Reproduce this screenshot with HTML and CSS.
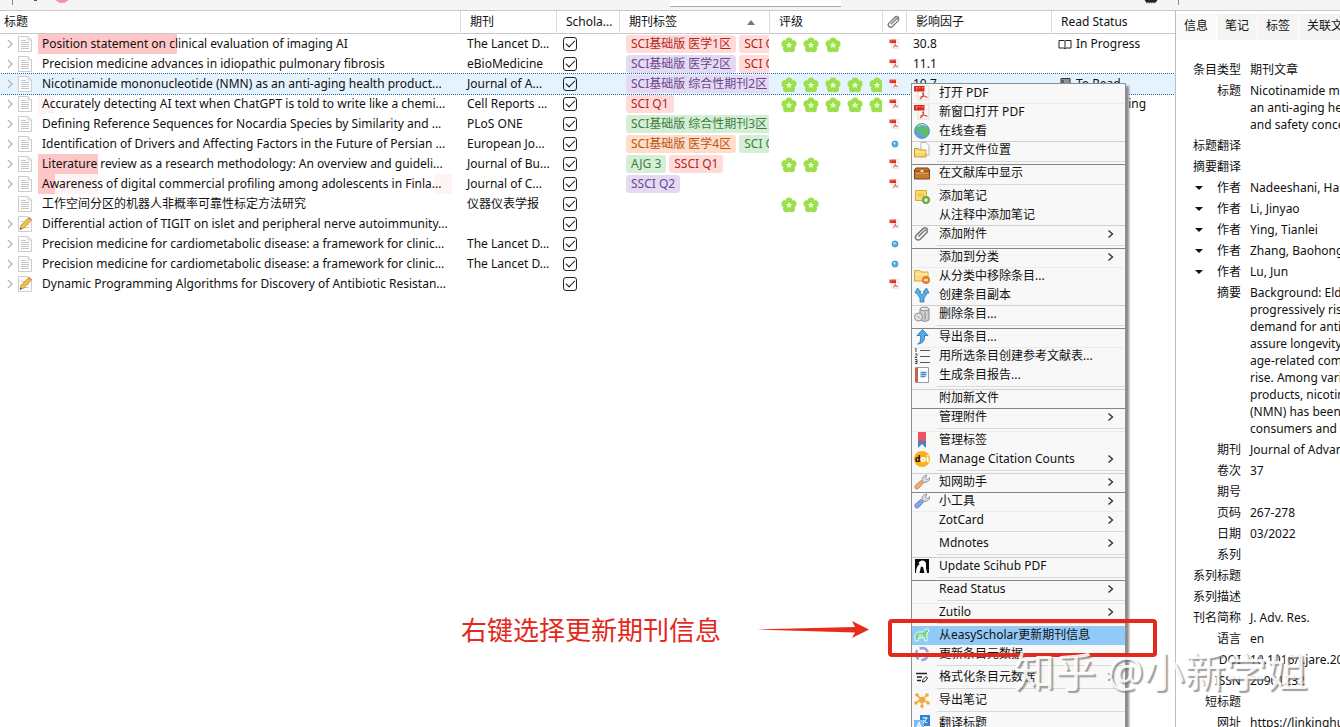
FILE: index.html
```html
<!DOCTYPE html>
<html lang="zh-CN">
<head>
    <meta charset="UTF-8">
    <meta name="viewport" content="width=device-width, initial-scale=1.0">
    <link rel="stylesheet" href="styles.css">
    <title>Zotero</title>
</head>
<body>
    <svg class="sprites" aria-hidden="true">
        <symbol id="twisty" viewBox="0 0 8 12"><path d="M2 2l4 4-4 4" fill="none" stroke="#b4b4b4" stroke-width="1.3"/></symbol>
        <symbol id="doc" viewBox="0 0 14 16"><path d="M.5.5h9.500l3.500 3.500v11.500h-13z" fill="#fcfcfc" stroke="#cdcdcd"/><path d="M10 .5v3.500h3.500" fill="none" stroke="#cdcdcd"/><path d="M3 4.500h5M3 6.500h8M3 8.500h8M3 10.500h8M3 12.500h8" stroke="#c6c6c6"/></symbol>
        <symbol id="note-doc" viewBox="0 0 14 16"><path d="M.5.5h9.500l3.500 3.500v11.500h-13z" fill="#fcfcfc" stroke="#cdcdcd"/><path d="M3 5.500h5M3 8.500h8M3 11.500h8" stroke="#cdcdcd"/><path d="M2 13.500l1-4L10 2l3 2.500L6 12z" fill="#f0c04c" stroke="#b98a2c" stroke-width=".7"/><path d="M10 2l1.200-1.200 3 2.500L13 4.500z" fill="#d9896a"/><path d="M2 13.500l.5-2 1.500 1.300z" fill="#444"/></symbol>
        <symbol id="pdf" viewBox="0 0 16 16"><path d="M4 1h11v14H4z" fill="#fbf7f6" stroke="#d8cfcd" stroke-width=".6"/><path d="M0 1h10.500v5.500H0z" fill="#dc2a20"/><path d="M2 2.800h2M5 2.800h1.500M8 2.800h1.500M2 4.300h1" stroke="#f6b0a8"/><path d="M9 7c1 2 0 5-3 7M8.500 8c.5 2.500 2.500 4 5 4.500M6.500 12c2-1 4-1 6-.5" fill="none" stroke="#d9483e" stroke-width="1.100"/></symbol>
        <symbol id="flower" viewBox="0 0 16 16"><g fill="#9be04a"><circle cx="8" cy="4" r="3.500"/><circle cx="12" cy="6.800" r="3.500"/><circle cx="10.500" cy="11.800" r="3.500"/><circle cx="5.500" cy="11.800" r="3.500"/><circle cx="4" cy="6.800" r="3.500"/></g><path d="M8 4.500l.9 2.400 2.600.1-2 1.600.7 2.500L8 9.700l-2.200 1.400.7-2.500-2-1.600 2.600-.1z" fill="#e9ffd2"/></symbol>
        <symbol id="clip" viewBox="0 0 16 16"><path d="M4.500 10.500l6-6a1.500 1.500 0 0 1 2.200 2.200l-6.500 6.500a2.700 2.700 0 0 1-3.900-3.900L9 2.600a2.900 2.900 0 0 1 4.800 1.200" fill="none" stroke="#777" stroke-width="1.500"/></symbol>
        <symbol id="dot" viewBox="0 0 8 8"><circle cx="4" cy="4" r="3" fill="#58b4e6" stroke="#2f86bd" stroke-width=".8"/><circle cx="3.500" cy="3.200" r="1.200" fill="#a9dcf6"/></symbol>
        <symbol id="book" viewBox="0 0 14 12"><path d="M1 2.500h5l1 .8 1-.8h5v7.500H8l-1 .8-1-.8H1zM7 3.300v7" fill="#fff" stroke="#222" stroke-width="1"/></symbol>
        <symbol id="book-shut" viewBox="0 0 14 12"><path d="M3 .5h9v11H3z" fill="#8d949b" stroke="#333"/><path d="M5 2v8" stroke="#333"/></symbol>
        <symbol id="arrow" viewBox="0 0 8 10"><path d="M1.500 1.500L5.500 5l-4 3.500" fill="none" stroke="#333" stroke-width="1.400"/></symbol>
        <symbol id="globe" viewBox="0 0 16 16"><circle cx="8" cy="8" r="7.500" fill="#5ba6cf" stroke="#3a84a3" stroke-width=".7"/><path d="M2 5c2-3 4-3.500 6-3.800l1 2.300-2 1.500 1 2-3 2L3 8zM10 4l3.500.5L15 8l-2 4.500-3 1.500-1-3.500L7 9l2-2.500z" fill="#5fbf5d"/><path d="M3.500 3.500c3-2.500 7-2.500 9 0" fill="none" stroke="#d6f0f2"/></symbol>
        <symbol id="folder-doc" viewBox="0 0 16 16"><path d="M7 .5h5l3 3V13H7z" fill="#fff" stroke="#b5b5b5"/><path d="M.5 6.500h4l1.500 1.500h6v7H.5z" fill="#f8d66c" stroke="#c99b38"/><path d="M1.500 10h10" stroke="#fff2b8"/></symbol>
        <symbol id="box" viewBox="0 0 16 16"><path d="M.5 4.500L2 3h12l1.500 1.500V14H.5z" fill="#c67a30" stroke="#7b4316"/><path d="M1 6h14" stroke="#7b4316"/><path d="M6.500 5h3v2h-3z" fill="#f4d9a6"/><path d="M2 8.500h12" stroke="#dc9a54"/></symbol>
        <symbol id="note-add" viewBox="0 0 16 16"><path d="M1.500 2.500h11v10h-11z" fill="#fbdc70" stroke="#dca92f"/><path d="M4 6h6M4 8h6" stroke="#e4b64a"/><circle cx="12" cy="12" r="3.700" fill="#72b443" stroke="#46812a" stroke-width=".6"/><path d="M10 12h4M12 10v4" stroke="#fff" stroke-width="1.200"/></symbol>
        <symbol id="folder-remove" viewBox="0 0 16 16"><path d="M.5 2.500h5L7 4h7v9H.5z" fill="#fbdc7c" stroke="#d6a63b"/><path d="M1 6h13" stroke="#fff3bf"/><circle cx="12" cy="12" r="3.700" fill="#ef8536" stroke="#bb5b18" stroke-width=".6"/><path d="M10 12h4" stroke="#fff" stroke-width="1.400"/></symbol>
        <symbol id="fork" viewBox="0 0 16 16"><path d="M6 15V11L2.500 6H1L3.500 1 7 5H5.500L8 8l2.500-3H9l3.500-4L15 6h-1.500l-3.500 5v4z" fill="#58aee6" stroke="#2779b4" stroke-width=".8"/></symbol>
        <symbol id="trash" viewBox="0 0 16 16"><path d="M6 3h9v11l-4 1.500-5-1.500z" fill="#cfcfcf" stroke="#8c8c8c"/><ellipse cx="10.500" cy="3" rx="4.500" ry="1.800" fill="#e9e9e9" stroke="#8c8c8c"/><circle cx="4.500" cy="11" r="4" fill="#e3e3e3" stroke="#8f8f8f"/><path d="M3 9.500l3 3M11 6.500v7" stroke="#8f8f8f"/></symbol>
        <symbol id="export" viewBox="0 0 16 16"><path d="M3.500 15c3-1 3.500-4 3-8.500H3L8.500.5l5.500 6h-3.500c.5 5-1.500 8-7 8.500z" fill="#52ace8" stroke="#2371ab" stroke-width=".8"/></symbol>
        <symbol id="numbers" viewBox="0 0 16 16"><path d="M6 2.500h10M6 8.500h10M6 14.500h10" stroke="#555"/><path d="M1 1l1-.5V4M1 6h2v1.500L1 9.500h2M1 11.500h2v4H1M1 13.500h2" fill="none" stroke="#333" stroke-width=".9"/></symbol>
        <symbol id="report" viewBox="0 0 16 16"><path d="M1.500.5h13v15h-13z" fill="#fff" stroke="#9a9a9a"/><path d="M1 1h3v14H1z" fill="#b9694a"/><path d="M6.500 5.500h6M6.500 7.500h6M6.500 9.500h5" stroke="#4d8ccb" stroke-width="1.300"/></symbol>
        <symbol id="bookmark" viewBox="0 0 16 16"><path d="M4 0h8v10H4z" fill="#f0525f"/><path d="M4 9h8v7l-4-4-4 4z" fill="#4b7fc4"/></symbol>
        <symbol id="wrench-orange" viewBox="0 0 16 16"><path d="M1.500 14.500c-1.500-1.500 0-3.500 1-4.500L7 6.500 9.500 9 6 13c-1.500 1.500-3 3-4.500 1.500z" fill="#f5a771" stroke="#b87443" stroke-width=".7"/><path d="M8 7c0-3 1.500-6 5-6l-1.500 3 2 1.500L16 3.500c0 3-2.500 5-6 5z" fill="#d8dbde" stroke="#7f868d" stroke-width=".8"/></symbol>
        <symbol id="wrench-blue" viewBox="0 0 16 16"><path d="M1.500 14.500c-1.500-1.500 0-3.500 1-4.500L7 6.500 9.500 9 6 13c-1.500 1.500-3 3-4.500 1.500z" fill="#7ea8e8" stroke="#4a6fae" stroke-width=".7"/><path d="M8 7c0-3 1.500-6 5-6l-1.500 3 2 1.500L16 3.500c0 3-2.500 5-6 5z" fill="#d8dbde" stroke="#7f868d" stroke-width=".8"/></symbol>
        <symbol id="raven" viewBox="0 0 16 16"><path d="M1 1h14v14H1z" fill="#0b0b0b"/><path d="M2 15c0-4 1-7 3.500-9L4.500 4.500l3-2C10 2 12 3.500 12 6v4l1 5h-2.500L9 9 7 8.500 5.500 15z" fill="#fff"/></symbol>
        <symbol id="horse" viewBox="0 0 16 16"><path d="M1 14V9c0-3 2-4 4-4h4c1-2 3-3 5-3l1 2-2 2v8h-2l-1-4H5l-1 4z" fill="#7fcf9c" stroke="#e8fff0"/><path d="M4 8h5M5 11h4" stroke="#d8f4c0"/></symbol>
        <symbol id="sync" viewBox="0 0 16 16"><circle cx="8" cy="8" r="6" fill="none" stroke="#93a5dc" stroke-width="2.500" stroke-dasharray="10 2.500"/></symbol>
        <symbol id="format" viewBox="0 0 16 16"><path d="M2 4.500h11M3 8h5M3 11.500h4" stroke="#222" stroke-width="1.600"/><path d="M8.500 13l.5-2.500L12 7.500l1.500 1.500L11 12.500z" fill="none" stroke="#222"/></symbol>
        <symbol id="hub" viewBox="0 0 16 16"><path d="M8 8L3 3M8 8l5-5M8 8L2 10M8 8l6 2M8 8v6" stroke="#f2a93b" stroke-width="1.500"/><g fill="#f2a93b"><circle cx="8" cy="8" r="3.200"/><circle cx="3" cy="3" r="1.800"/><circle cx="13" cy="3" r="1.800"/><circle cx="2" cy="11" r="1.800"/><circle cx="14" cy="11" r="1.800"/><circle cx="8" cy="14.200" r="1.700"/></g></symbol>
        <symbol id="translate" viewBox="0 0 16 16"><path d="M6 0h10v11H6z" fill="#2c86d8"/><path d="M0 5h10v11H0z" fill="#7dbcf0"/><path d="M8.500 3h5M11 2v1.500M9 8c2-1 3-3 3.500-5M9.500 5c1 2 2 2.500 4 3" fill="none" stroke="#fff"/><path d="M2.500 13.500L5 7.500l2.500 6M3.500 11.500h3" fill="none" stroke="#fff" stroke-width="1.200"/></symbol>
    </svg>

    <header class="toolbar">
        <span class="bar bar-left"></span>
        <span class="speck"></span>
        <span class="pink-dot"></span>
        <input class="search" type="text" aria-label="搜索">
        <svg class="ghost" viewBox="0 0 16 5" aria-hidden="true"><path d="M0 0h16l-2 3H2z" fill="#222"/><path d="M3 3v1M6 3v1M9 3v1M12 3v1" stroke="#222" stroke-width="1.500"/></svg>
        <span class="bar bar-right"></span>
    </header>

    <main class="workspace">
        <section class="items">
            <table>
                <colgroup>
                    <col class="c-title"><col class="c-journal"><col class="c-scholar"><col class="c-tags"><col class="c-rating"><col class="c-attach"><col class="c-if"><col class="c-status">
                </colgroup>
                <thead>
                    <tr>
                        <th class="first">标题</th>
                        <th>期刊</th>
                        <th>Schola...</th>
                        <th>期刊标签<span class="sort"></span></th>
                        <th>评级</th>
                        <th class="clip-head"><svg class="i14" aria-label="附件"><use href="#clip"/></svg></th>
                        <th>影响因子</th>
                        <th>Read Status</th>
                    </tr>
                </thead>
                <tbody>
                    <tr>
                        <td><div class="title"><svg class="twisty"><use href="#twisty"/></svg><svg class="doc"><use href="#doc"/></svg><span class="heat heat-a">Position statement on clinical evaluation of imaging AI</span></div></td>
                        <td>The Lancet D...</td>
                        <td><input type="checkbox" aria-label="Scholar" checked></td>
                        <td><div class="tags"><span class="tag red">SCI基础版 医学1区</span><span class="tag red">SCI Q1</span></div></td>
                        <td><div class="stars"><svg><use href="#flower"/></svg><svg><use href="#flower"/></svg><svg><use href="#flower"/></svg></div></td>
                        <td><svg class="pdf"><use href="#pdf"/></svg></td>
                        <td>30.8</td>
                        <td><div class="status"><svg><use href="#book"/></svg>In Progress</div></td>
                    </tr>
                    <tr>
                        <td><div class="title"><svg class="twisty"><use href="#twisty"/></svg><svg class="doc"><use href="#doc"/></svg><span class="heat">Precision medicine advances in idiopathic pulmonary fibrosis</span></div></td>
                        <td>eBioMedicine</td>
                        <td><input type="checkbox" aria-label="Scholar" checked></td>
                        <td><div class="tags"><span class="tag purple">SCI基础版 医学2区</span><span class="tag red">SCI Q1</span></div></td>
                        <td></td>
                        <td><svg class="pdf"><use href="#pdf"/></svg></td>
                        <td>11.1</td>
                        <td></td>
                    </tr>
                    <tr class="selected">
                        <td><div class="title"><svg class="twisty"><use href="#twisty"/></svg><svg class="doc"><use href="#doc"/></svg><span class="heat">Nicotinamide mononucleotide (NMN) as an anti-aging health product...</span></div></td>
                        <td>Journal of A...</td>
                        <td><input type="checkbox" aria-label="Scholar" checked></td>
                        <td><div class="tags"><span class="tag purple">SCI基础版 综合性期刊2区</span></div></td>
                        <td><div class="stars"><svg><use href="#flower"/></svg><svg><use href="#flower"/></svg><svg><use href="#flower"/></svg><svg><use href="#flower"/></svg><svg><use href="#flower"/></svg></div></td>
                        <td><svg class="pdf"><use href="#pdf"/></svg></td>
                        <td>10.7</td>
                        <td><div class="status"><svg><use href="#book-shut"/></svg>To Read</div></td>
                    </tr>
                    <tr>
                        <td><div class="title"><svg class="twisty"><use href="#twisty"/></svg><svg class="doc"><use href="#doc"/></svg><span class="heat heat-b">Accurately detecting AI text when ChatGPT is told to write like a chemi...</span></div></td>
                        <td>Cell Reports ...</td>
                        <td><input type="checkbox" aria-label="Scholar" checked></td>
                        <td><div class="tags"><span class="tag red">SCI Q1</span></div></td>
                        <td><div class="stars"><svg><use href="#flower"/></svg><svg><use href="#flower"/></svg><svg><use href="#flower"/></svg><svg><use href="#flower"/></svg><svg><use href="#flower"/></svg></div></td>
                        <td><svg class="pdf"><use href="#pdf"/></svg></td>
                        <td></td>
                        <td><div class="status"><svg><use href="#book-shut"/></svg>Not Reading</div></td>
                    </tr>
                    <tr>
                        <td><div class="title"><svg class="twisty"><use href="#twisty"/></svg><svg class="doc"><use href="#doc"/></svg><span class="heat">Defining Reference Sequences for Nocardia Species by Similarity and ...</span></div></td>
                        <td>PLoS ONE</td>
                        <td><input type="checkbox" aria-label="Scholar" checked></td>
                        <td><div class="tags"><span class="tag green">SCI基础版 综合性期刊3区</span></div></td>
                        <td></td>
                        <td><svg class="pdf"><use href="#pdf"/></svg></td>
                        <td></td>
                        <td></td>
                    </tr>
                    <tr>
                        <td><div class="title"><svg class="twisty"><use href="#twisty"/></svg><svg class="doc"><use href="#doc"/></svg><span class="heat">Identification of Drivers and Affecting Factors in the Future of Persian ...</span></div></td>
                        <td>European Jo...</td>
                        <td><input type="checkbox" aria-label="Scholar" checked></td>
                        <td><div class="tags"><span class="tag orange">SCI基础版 医学4区</span><span class="tag green">SCI Q3</span></div></td>
                        <td></td>
                        <td><svg class="dot"><use href="#dot"/></svg></td>
                        <td></td>
                        <td></td>
                    </tr>
                    <tr>
                        <td><div class="title"><svg class="twisty"><use href="#twisty"/></svg><svg class="doc"><use href="#doc"/></svg><span class="heat heat-c">Literature review as a research methodology: An overview and guideli...</span></div></td>
                        <td>Journal of Bu...</td>
                        <td><input type="checkbox" aria-label="Scholar" checked></td>
                        <td><div class="tags"><span class="tag green">AJG 3</span><span class="tag red">SSCI Q1</span></div></td>
                        <td><div class="stars"><svg><use href="#flower"/></svg><svg><use href="#flower"/></svg></div></td>
                        <td><svg class="pdf"><use href="#pdf"/></svg></td>
                        <td></td>
                        <td></td>
                    </tr>
                    <tr>
                        <td><div class="title"><svg class="twisty"><use href="#twisty"/></svg><svg class="doc"><use href="#doc"/></svg><span class="heat heat-d">Awareness of digital commercial profiling among adolescents in Finla...</span></div></td>
                        <td>Journal of C...</td>
                        <td><input type="checkbox" aria-label="Scholar" checked></td>
                        <td><div class="tags"><span class="tag purple">SSCI Q2</span></div></td>
                        <td></td>
                        <td><svg class="pdf"><use href="#pdf"/></svg></td>
                        <td></td>
                        <td></td>
                    </tr>
                    <tr>
                        <td><div class="title"><svg class="twisty"></svg><svg class="doc"><use href="#doc"/></svg><span class="heat">工作空间分区的机器人非概率可靠性标定方法研究</span></div></td>
                        <td>仪器仪表学报</td>
                        <td><input type="checkbox" aria-label="Scholar" checked></td>
                        <td></td>
                        <td><div class="stars"><svg><use href="#flower"/></svg><svg><use href="#flower"/></svg></div></td>
                        <td></td>
                        <td></td>
                        <td></td>
                    </tr>
                    <tr>
                        <td><div class="title"><svg class="twisty"><use href="#twisty"/></svg><svg class="doc"><use href="#note-doc"/></svg><span class="heat">Differential action of TIGIT on islet and peripheral nerve autoimmunity...</span></div></td>
                        <td></td>
                        <td><input type="checkbox" aria-label="Scholar" checked></td>
                        <td></td>
                        <td></td>
                        <td><svg class="pdf"><use href="#pdf"/></svg></td>
                        <td></td>
                        <td></td>
                    </tr>
                    <tr>
                        <td><div class="title"><svg class="twisty"><use href="#twisty"/></svg><svg class="doc"><use href="#doc"/></svg><span class="heat">Precision medicine for cardiometabolic disease: a framework for clinic...</span></div></td>
                        <td>The Lancet D...</td>
                        <td><input type="checkbox" aria-label="Scholar" checked></td>
                        <td></td>
                        <td></td>
                        <td><svg class="dot"><use href="#dot"/></svg></td>
                        <td></td>
                        <td></td>
                    </tr>
                    <tr>
                        <td><div class="title"><svg class="twisty"><use href="#twisty"/></svg><svg class="doc"><use href="#doc"/></svg><span class="heat">Precision medicine for cardiometabolic disease: a framework for clinic...</span></div></td>
                        <td>The Lancet D...</td>
                        <td><input type="checkbox" aria-label="Scholar" checked></td>
                        <td></td>
                        <td></td>
                        <td><svg class="dot"><use href="#dot"/></svg></td>
                        <td></td>
                        <td></td>
                    </tr>
                    <tr>
                        <td><div class="title"><svg class="twisty"><use href="#twisty"/></svg><svg class="doc"><use href="#note-doc"/></svg><span class="heat">Dynamic Programming Algorithms for Discovery of Antibiotic Resistan...</span></div></td>
                        <td></td>
                        <td><input type="checkbox" aria-label="Scholar" checked></td>
                        <td></td>
                        <td></td>
                        <td><svg class="pdf"><use href="#pdf"/></svg></td>
                        <td></td>
                        <td></td>
                    </tr>
                </tbody>
            </table>
        </section>

        <aside class="details">
            <nav class="tabs">
                <button class="active">信息</button>
                <button>笔记</button>
                <button>标签</button>
                <button>关联文献</button>
            </nav>
            <dl class="fields">
                <dt>条目类型</dt><dd>期刊文章</dd>
                <dt>标题</dt><dd>Nicotinamide mononucleotide (NMN) as<br>an anti-aging health product – Promises<br>and safety concerns</dd>
                <dt>标题翻译</dt><dd></dd>
                <dt>摘要翻译</dt><dd></dd>
                <dt><button class="caret" aria-label="作者类型"></button>作者</dt><dd>Nadeeshani, Harshani</dd>
                <dt><button class="caret" aria-label="作者类型"></button>作者</dt><dd>Li, Jinyao</dd>
                <dt><button class="caret" aria-label="作者类型"></button>作者</dt><dd>Ying, Tianlei</dd>
                <dt><button class="caret" aria-label="作者类型"></button>作者</dt><dd>Zhang, Baohong</dd>
                <dt><button class="caret" aria-label="作者类型"></button>作者</dt><dd>Lu, Jun</dd>
                <dt>摘要</dt><dd>Background: Elderly population has been<br>progressively rising in the world, thus the<br>demand for anti-aging heath products to<br>assure longevity as well as to ameliorate<br>age-related complications is also on the<br>rise. Among various anti-aging health<br>products, nicotinamide mononucleotide<br>(NMN) has been gaining attentions of the<br>consumers and the scientific community</dd>
                <dt>期刊</dt><dd>Journal of Advanced Research</dd>
                <dt>卷次</dt><dd>37</dd>
                <dt>期号</dt><dd></dd>
                <dt>页码</dt><dd>267-278</dd>
                <dt>日期</dt><dd>03/2022</dd>
                <dt>系列</dt><dd></dd>
                <dt>系列标题</dt><dd></dd>
                <dt>系列描述</dt><dd></dd>
                <dt>刊名简称</dt><dd>J. Adv. Res.</dd>
                <dt>语言</dt><dd>en</dd>
                <dt>DOI</dt><dd>10.1016/j.jare.2021.08.003</dd>
                <dt>ISSN</dt><dd>20901232</dd>
                <dt>短标题</dt><dd></dd>
                <dt>网址</dt><dd>https://linkinghub.elsevier.com</dd>
            </dl>
        </aside>
    </main>

    <div class="menu" role="menu">
        <button><svg><use href="#pdf"/></svg>打开 PDF</button>
        <button class="faint"><svg><use href="#pdf"/></svg>新窗口打开 PDF</button>
        <button><svg><use href="#globe"/></svg>在线查看</button>
        <button class="light"><svg><use href="#folder-doc"/></svg>打开文件位置</button>
        <hr>
        <button class="dark"><svg><use href="#box"/></svg>在文献库中显示</button>
        <hr>
        <button><svg><use href="#note-add"/></svg>添加笔记</button>
        <button><svg></svg>从注释中添加笔记</button>
        <button class="light sub"><svg><use href="#clip"/></svg>添加附件</button>
        <hr>
        <button class="dark sub"><svg></svg>添加到分类</button>
        <button class="faint"><svg><use href="#folder-remove"/></svg>从分类中移除条目...</button>
        <button><svg><use href="#fork"/></svg>创建条目副本</button>
        <button class="light"><svg><use href="#trash"/></svg>删除条目...</button>
        <hr>
        <button class="dark"><svg><use href="#export"/></svg>导出条目...</button>
        <button class="faint"><svg><use href="#numbers"/></svg>用所选条目创建参考文献表...</button>
        <button><svg><use href="#report"/></svg>生成条目报告...</button>
        <hr>
        <button class="light"><svg></svg>附加新文件</button>
        <button class="dark sub"><svg></svg>管理附件</button>
        <hr>
        <button class="faint"><svg><use href="#bookmark"/></svg>管理标签</button>
        <button class="sub"><span class="doi">d<b>oi</b></span>Manage Citation Counts</button>
        <hr>
        <button class="light sub"><svg><use href="#wrench-orange"/></svg>知网助手</button>
        <button class="dark sub"><svg><use href="#wrench-blue"/></svg>小工具</button>
        <button class="faint sub"><svg></svg>ZotCard</button>
        <hr>
        <button class="sub"><svg></svg>Mdnotes</button>
        <hr>
        <button class="light"><svg><use href="#raven"/></svg>Update Scihub PDF</button>
        <hr>
        <button class="dark sub"><svg></svg>Read Status</button>
        <hr>
        <button class="faint sub"><svg></svg>Zutilo</button>
        <hr>
        <button class="current"><svg><use href="#horse"/></svg>从easyScholar更新期刊信息</button>
        <button><svg><use href="#sync"/></svg>更新条目元数据</button>
        <hr>
        <button class="sub"><svg><use href="#format"/></svg>格式化条目元数据</button>
        <hr>
        <button><svg><use href="#hub"/></svg>导出笔记</button>
        <hr>
        <button><svg><use href="#translate"/></svg>翻译标题</button>
    </div>

    <div class="callout">
        <span>右键选择更新期刊信息</span>
        <svg viewBox="0 0 112 20" aria-hidden="true"><path d="M0 9.500L98 7l-3-6 17 8.500L95 18l3-5.500z" fill="#ea2a1c"/></svg>
    </div>
    <div class="red-box"></div>
    <div class="watermark">知乎 @小新学姐</div>

    <script>
        // submenu arrows
        document.querySelectorAll(".menu .sub").forEach(function (item) {
            item.insertAdjacentHTML("beforeend", '<svg class="arrow"><use href="#arrow"/></svg>');
        });
    </script>
</body>
</html>
```
FILE: styles.css
```css
* {
    box-sizing: border-box;
}

body {
    margin: 0;
    height: 100vh;
    overflow: hidden;
    position: relative;
    display: flex;
    flex-direction: column;
    background: #fff;
    color: #111;
    font-family: "Noto Sans", "Noto Sans CJK SC", sans-serif;
    font-size: 12px;
}

button {
    border: 0;
    padding: 0;
    background: none;
    color: inherit;
    font: inherit;
}

svg {
    flex: none;
    display: block;
}

.sprites {
    position: absolute;
    width: 0;
    height: 0;
}

/* toolbar */
.toolbar {
    flex: none;
    display: flex;
    align-items: flex-start;
    height: 11px;
    overflow: hidden;
    background: #f5f5f5;
    border-bottom: 1px solid #c6c6c6;
}

.bar {
    width: 1px;
    height: 5px;
    background: #888;
}

.bar-left {
    margin-left: 12px;
}

.speck {
    width: 3px;
    height: 1px;
    margin-left: 21px;
    background: #555;
}

.pink-dot {
    width: 16px;
    height: 16px;
    margin: -13px 0 0 17px;
    border-radius: 50%;
    background: #f78fa7;
}

.search {
    width: 171px;
    height: 7px;
    margin-left: auto;
    padding: 0;
    border: 0;
    border-bottom: 1px solid #aaa;
    background: #fff;
}

.ghost {
    width: 16px;
    height: 4px;
    margin-left: 302px;
}

.bar-right {
    margin: 0 161px 0 19px;
}

/* items list */
.workspace {
    flex: 1;
    display: flex;
    min-height: 0;
}

.items {
    flex: 1;
    min-width: 0;
    overflow: hidden;
}

table {
    width: 100%;
    table-layout: fixed;
    border-spacing: 0;
}

.c-journal { width: 96px; }
.c-scholar { width: 63px; }
.c-tags { width: 150px; }
.c-rating { width: 113px; }
.c-attach { width: 24px; }
.c-if { width: 145px; }
.c-status { width: 124px; }

th {
    height: 23px;
    padding: 0 0 0 9px;
    border-left: 1px solid #dcdcdc;
    border-bottom: 1px solid #c8c8c8;
    font-weight: normal;
    text-align: left;
    line-height: 20px;
    white-space: nowrap;
}

th.first {
    padding-left: 4px;
    border-left: 0;
}

th.clip-head {
    padding-left: 4px;
}

.sort {
    float: right;
    margin: 8px 14px 0 0;
    border: 4px solid transparent;
    border-top: 0;
    border-bottom: 5px solid #777;
}

td {
    height: 20px;
    padding: 0 0 0 7px;
    line-height: 20px;
    white-space: nowrap;
    overflow: hidden;
}

td:first-child {
    padding: 0;
}

.selected {
    background: #e5f3ff;
    outline: 1px dotted #1668b0;
}

.title {
    display: flex;
    align-items: center;
    height: 20px;
}

.twisty {
    width: 8px;
    height: 12px;
    margin: 0 4px 0 6px;
}

.doc {
    width: 14px;
    height: 16px;
}

.heat {
    flex: 1;
    height: 20px;
    margin-left: 6px;
    padding-left: 4px;
    background-repeat: no-repeat;
}

.heat-a { background-image: linear-gradient(90deg, #ffc6c8 139px, transparent 139px); }
.heat-b { background-image: linear-gradient(90deg, #fff4f4 16px, transparent 16px); }
.heat-c { background-image: linear-gradient(90deg, #ffc6c8 60px, transparent 60px); }
.heat-d { background-image: linear-gradient(90deg, #ffc6c8 17px, #fff4f4 17px, #fff4f4 60px, transparent 60px, transparent 396px, #fff4f4 396px, #fff4f4 414px, transparent 414px); }

input[type="checkbox"] {
    appearance: none;
    display: block;
    width: 14px;
    height: 14px;
    margin: 0;
    border: 1px solid #222;
    border-radius: 3px;
}

input[type="checkbox"]::before {
    content: "";
    display: block;
    width: 8px;
    height: 4px;
    margin: 2px 0 0 2px;
    border-left: 1px solid #111;
    border-bottom: 1px solid #111;
    transform: rotate(-45deg);
}

.tags {
    display: flex;
    gap: 3px;
}

.tag {
    flex: none;
    height: 18px;
    padding: 0 5px;
    border-radius: 3px;
    line-height: 18px;
}

.red { background: #ffdcd9; color: #b3261e; }
.purple { background: #e4daf1; color: #6b4691; }
.green { background: #d5efd6; color: #3d7d43; }
.orange { background: #ffddc8; color: #b9561b; }

.stars {
    display: flex;
    gap: 6px;
    padding: 2px 0 0 5px;
}

.stars svg {
    width: 16px;
    height: 16px;
}

.i14 {
    width: 14px;
    height: 14px;
}

.pdf {
    width: 11px;
    height: 10px;
}

.dot {
    width: 8px;
    height: 8px;
    margin-left: 2px;
}

.status {
    display: flex;
    align-items: center;
    gap: 4px;
}

.status svg {
    width: 14px;
    height: 12px;
}

/* item details */
.details {
    flex: none;
    width: 165px;
    overflow: hidden;
    border-left: 1px solid #bdbdbd;
}

.tabs {
    display: flex;
    gap: 1px;
    padding-top: 3px;
}

.tabs button {
    flex: none;
    height: 26px;
    padding: 0 8px 4px;
    background: #f4f4f4;
}

.tabs .active {
    background: #fafafa;
}

.fields {
    display: grid;
    grid-template-columns: 65px max-content;
    column-gap: 9px;
    margin: 19px 0 0;
}

dt,
dd {
    min-height: 21px;
    margin: 0;
    padding: 2px 0;
    line-height: 17px;
    white-space: nowrap;
}

dt {
    text-align: right;
}

.caret {
    float: left;
    margin: 7px 0 0 19px;
    border: 4px solid transparent;
    border-top-color: #111;
    border-bottom: 0;
}

/* context menu */
.menu {
    position: absolute;
    top: 83px;
    left: 911px;
    width: 215px;
    border: 1px solid #8f8f8f;
    background: #f8f8f8;
    box-shadow: 3px 3px 2px #8c8c8c;
}

.menu button {
    display: flex;
    align-items: center;
    width: 100%;
    height: 19px;
    padding: 0 0 2px 2px;
    border-top: 1px solid transparent;
    line-height: 16px;
    white-space: nowrap;
}

.menu svg {
    width: 16px;
    height: 16px;
    margin-right: 9px;
}

.menu .arrow {
    width: 8px;
    height: 10px;
    margin: 0 10px 0 auto;
}

.menu .faint { border-top-color: #ebebeb; }
.menu .light { border-top-color: #cfcfcf; }
.menu .dark { border-top-color: #858585; }

.menu .current {
    background: #91c9f7;
}

.menu hr {
    height: 3px;
    margin: 1px 0 0 25px;
    border: 0;
    border-top: 1px solid #d9d9d9;
}

.doi {
    width: 16px;
    height: 16px;
    margin-right: 9px;
    border-radius: 8px;
    background: #fbb01b;
    font-size: 9px;
    font-weight: bold;
    line-height: 15px;
    text-align: center;
}

.doi b {
    color: #fff;
}

/* annotations */
.callout {
    position: absolute;
    top: 612px;
    left: 461px;
    display: flex;
    align-items: center;
    gap: 36px;
    color: #e2291c;
    font-size: 26px;
    line-height: 36px;
}

.callout svg {
    width: 112px;
    height: 20px;
}

.red-box {
    position: absolute;
    top: 619px;
    left: 888px;
    width: 269px;
    height: 38px;
    border: 4px solid #e2291c;
    border-radius: 4px;
}

.watermark {
    position: absolute;
    top: 647px;
    left: 1014px;
    color: rgba(255, 255, 255, 0.9);
    font-size: 41px;
    line-height: 48px;
    text-shadow: 2px 2px 1px rgba(120, 120, 120, 0.7);
    white-space: nowrap;
}
```
